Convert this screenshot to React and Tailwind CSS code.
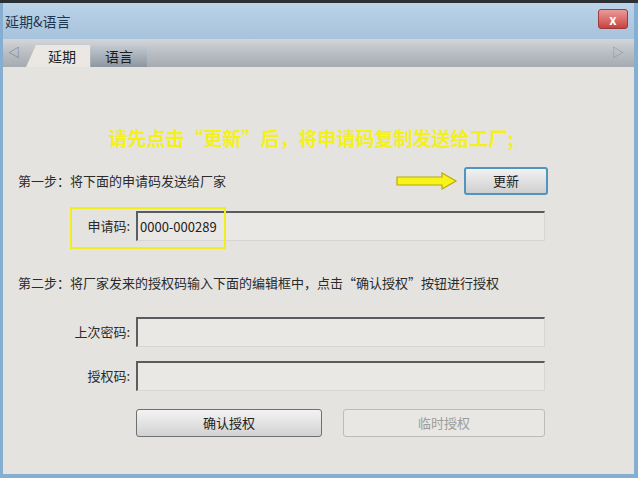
import React from 'react';

const cjk = { fontFamily: '"Noto Sans CJK SC", "Noto Sans", sans-serif' };

function Field({ label, value, children }) {
  return (
    <div className="relative flex items-center">
      <div className="w-[118px] pr-[6px] text-right text-[13px] text-[#2b2b2b]">{label}</div>
      <div className="flex h-[30px] w-[409px] items-center border-l-2 border-t-2 border-b border-r border-l-[#5a5e63] border-t-[#585c61] border-b-[#d8d6d2] border-r-[#d8d6d2] bg-[#eae8e4] pl-[2px] text-[13px] text-[#222]">
        {value}
      </div>
      {children}
    </div>
  );
}

function Arrow() {
  return (
    <svg width="62" height="18" viewBox="0 0 62 18" className="mr-[6px]">
      <path d="M1 5 H46 V1 L60 9 L46 17 V13 H1 Z" fill="#f7f41a" stroke="#b9a90c" strokeWidth="1.2" />
    </svg>
  );
}

export default function App() {
  return (
    <div className="flex h-[478px] w-[638px] flex-col overflow-hidden bg-[#2b3036]" style={cjk}>
      <div className="h-[3px]" />
      <div className="flex flex-1 flex-col border-l-[3px] border-r-[4px] border-b-[4px] border-[#86aed0]">
        <div className="flex h-[36px] items-center justify-between bg-gradient-to-b from-[#bcd3e8] to-[#a7c2dc] pl-[2px] pr-[6px]">
          <span className="text-[14px] text-[#1f3650]">延期&amp;语言</span>
          <div className="mt-[-4px] flex h-[20px] w-[30px] items-center justify-center rounded-[3px] border border-[#9a3a3a] bg-gradient-to-b from-[#e99a9a] to-[#c9403f] text-[13px] font-bold leading-none text-white">
            x
          </div>
        </div>
        <div className="flex h-[28px] items-end bg-gradient-to-b from-[#d3d6d9] via-[#b9bec3] to-[#a5abb1] pr-[10px]">
          <span className="mb-[6px] ml-[5px] w-[18px] text-[12px] text-[#707478]">◁</span>
          <div
            className="flex h-[22px] w-[64px] items-center justify-center bg-[#ebe8e3] pl-[8px] text-[14px] text-[#222]"
            style={{ clipPath: 'polygon(10px 0, 100% 0, 100% 100%, 0 100%)' }}
          >
            延期
          </div>
          <div className="ml-[1px] flex h-[22px] w-[56px] items-center justify-center rounded-t-[2px] bg-gradient-to-b from-[#c4cbd2] to-[#8d97a1] text-[14px] text-[#1c1c1c]">
            语言
          </div>
          <span className="mb-[6px] ml-auto text-[12px] text-[#8a8e92]">▷</span>
        </div>
        <div className="flex flex-1 flex-col bg-[#e5e3df] pl-[15px]">
          <div className="mt-[58px] pr-[30px] text-center text-[19px] font-bold leading-[26px] text-[#f3f01c]">
            请先点击“更新”后，将申请码复制发送给工厂;
          </div>
          <div className="mt-[16px] flex h-[28px] items-center">
            <span className="text-[13px] text-[#2b2b2b]">第一步：将下面的申请码发送给厂家</span>
            <div className="ml-auto mr-[86px] flex items-center">
              <Arrow />
              <div className="flex h-[28px] w-[84px] items-center justify-center rounded-[3px] border-2 border-[#4f95bf] bg-gradient-to-b from-[#f2f2f2] to-[#cfcfcf] text-[13px] text-[#222]">
                更新
              </div>
            </div>
          </div>
          <div className="mt-[16px]">
            <Field label="申请码:" value="0000-000289">
              <div className="pointer-events-none absolute left-[52px] top-[-4px] h-[42px] w-[156px] border-2 border-[#f2ee1e]" />
            </Field>
          </div>
          <div className="mt-[33px] text-[13px] leading-[18px] text-[#2b2b2b]">
            第二步：将厂家发来的授权码输入下面的编辑框中，点击“确认授权”按钮进行授权
          </div>
          <div className="mt-[25px]">
            <Field label="上次密码:" value="" />
          </div>
          <div className="mt-[14px]">
            <Field label="授权码:" value="" />
          </div>
          <div className="mt-[18px] flex">
            <div className="ml-[118px] flex h-[28px] w-[186px] items-center justify-center rounded-[3px] border border-[#6d6f72] bg-gradient-to-b from-[#f3f3f3] to-[#d2d2d2] text-[13px] text-[#222]">
              确认授权
            </div>
            <div className="ml-[21px] flex h-[28px] w-[202px] items-center justify-center rounded-[3px] border border-[#bdbcb9] bg-[#e9e7e4] text-[13px] text-[#9c9c9c]">
              临时授权
            </div>
          </div>
        </div>
      </div>
    </div>
  );
}
